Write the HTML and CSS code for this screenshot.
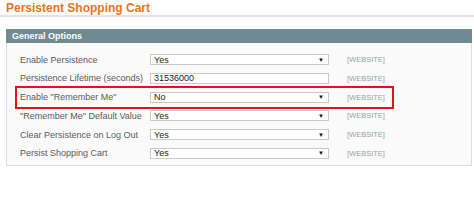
FILE: index.html
```html
<!DOCTYPE html>
<html lang="en">
<head>
    <meta charset="UTF-8">
    <title>Persistent Shopping Cart</title>
    <link rel="stylesheet" href="styles.css">
</head>
<body>
    <div class="page-title">
        <h3>Persistent Shopping Cart</h3>
    </div>

    <div class="section">
        <div class="section-head">General Options</div>
        <div class="section-body">
            <div class="row">
                <label>Enable Persistence</label>
                <div class="field select"><span>Yes</span><i>&#9660;</i></div>
                <span class="scope">[WEBSITE]</span>
            </div>
            <div class="row">
                <label>Persistence Lifetime (seconds)</label>
                <div class="field"><span>31536000</span></div>
                <span class="scope">[WEBSITE]</span>
            </div>
            <div class="row highlight">
                <label>Enable "Remember Me"</label>
                <div class="field select"><span>No</span><i>&#9660;</i></div>
                <span class="scope">[WEBSITE]</span>
            </div>
            <div class="row">
                <label>"Remember Me" Default Value</label>
                <div class="field select"><span>Yes</span><i>&#9660;</i></div>
                <span class="scope">[WEBSITE]</span>
            </div>
            <div class="row">
                <label>Clear Persistence on Log Out</label>
                <div class="field select"><span>Yes</span><i>&#9660;</i></div>
                <span class="scope">[WEBSITE]</span>
            </div>
            <div class="row">
                <label>Persist Shopping Cart</label>
                <div class="field select"><span>Yes</span><i>&#9660;</i></div>
                <span class="scope">[WEBSITE]</span>
            </div>
        </div>
    </div>
</body>
</html>
```
FILE: styles.css
```css
* {
    margin: 0;
    padding: 0;
    box-sizing: border-box;
    font-family: 'Liberation Sans', Arial, sans-serif;
}

body {
    background-color: #fff;
    color: #444;
    width: 474px;
}

/* Titulo */
.page-title {
    border-bottom: 2px solid #e3e3e3;
    padding: 2px 0 0 6px;
    height: 17px;
}

.page-title h3 {
    font-size: 12px;
    line-height: 12px;
    font-weight: bold;
    color: #e8741e;
}

/* Secao */
.section {
    margin: 12px 2px 0 6px;
}

.section-head {
    background-color: #6f8a91;
    color: #fff;
    font-size: 9px;
    font-weight: bold;
    height: 14px;
    line-height: 14px;
    padding-left: 6px;
}

.section-body {
    background-color: #fafafa;
    border: 1px solid #dedede;
    border-top: none;
    padding: 11px 0 6px 13px;
}

.row {
    display: flex;
    align-items: center;
    height: 11px;
    margin-bottom: 7.8px;
    position: relative;
}

.row:last-child {
    margin-bottom: 0;
}

.row label {
    width: 130px;
    font-size: 9px;
    color: #5a5a5a;
}

.field {
    width: 179px;
    height: 11px;
    background-color: #fff;
    border: 1px solid #c9c9c9;
    display: flex;
    align-items: center;
    justify-content: space-between;
    padding: 0 4px 0 3px;
    font-size: 9px;
    color: #222;
}

.field i {
    font-style: normal;
    font-size: 6px;
    color: #111;
}

.scope {
    margin-left: 18px;
    font-size: 7.5px;
    color: #93a3a8;
}

/* Destaque */
.highlight::after {
    content: "";
    position: absolute;
    left: -5px;
    top: -6px;
    width: 375px;
    height: 19px;
    border: 2px solid #e0141b;
}
```
